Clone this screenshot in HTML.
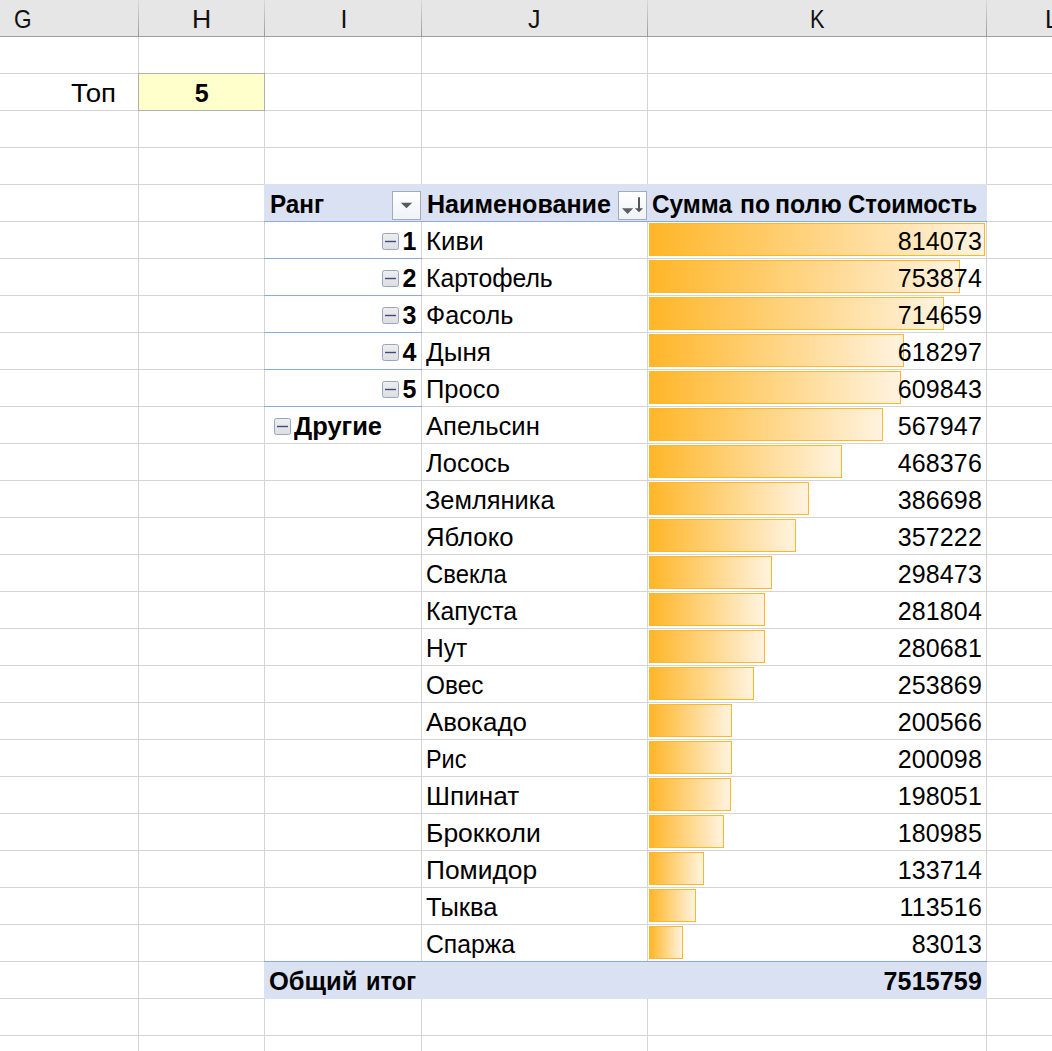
<!DOCTYPE html><html lang="ru"><head><meta charset="utf-8"><title>Sheet</title><style>
html,body{margin:0;padding:0;background:#fff;overflow:hidden;}
body{width:1052px;height:1051px;font-family:"Liberation Sans",sans-serif;}
div,span{position:absolute;box-sizing:border-box;}
.t{font-size:25px;line-height:37px;height:37px;white-space:nowrap;transform-origin:0 0;color:#000;}
.b{font-weight:bold;}
.n{letter-spacing:0.15px;}
.vg{top:37px;width:1px;height:1014px;background:#d4d4d4;}
.hg{left:0;width:1052px;height:1px;background:#d4d4d4;}
.bl{left:264px;width:158px;height:1px;background:#8ea9db;}
.bar{left:649px;height:33px;border:1px solid #ffb628;background:linear-gradient(90deg,#ffb628 0%,#fff3df 100%);}
.fb{width:29px;height:29px;border:1px solid #a3abb4;background:linear-gradient(180deg,#ffffff,#eff2f7);}
#s{left:0;top:0;width:1052px;height:1051px;overflow:hidden;background:#fff;}
</style></head><body><div id="s">
<div style="left:0;top:0;width:1052px;height:36px;background:#e6e6e6;"></div>
<div style="left:0;top:36px;width:1052px;height:1px;background:#9e9e9e;"></div>
<div style="left:138px;top:0;width:1px;height:37px;background:linear-gradient(180deg,#dadada,#9a9a9a);"></div>
<div style="left:264px;top:0;width:1px;height:37px;background:linear-gradient(180deg,#dadada,#9a9a9a);"></div>
<div style="left:421px;top:0;width:1px;height:37px;background:linear-gradient(180deg,#dadada,#9a9a9a);"></div>
<div style="left:647px;top:0;width:1px;height:37px;background:linear-gradient(180deg,#dadada,#9a9a9a);"></div>
<div style="left:986px;top:0;width:1px;height:37px;background:linear-gradient(180deg,#dadada,#9a9a9a);"></div>
<div class="vg" style="left:138px"></div>
<div class="vg" style="left:264px"></div>
<div class="vg" style="left:421px"></div>
<div class="vg" style="left:647px"></div>
<div class="vg" style="left:986px"></div>
<div class="hg" style="top:73px"></div>
<div class="hg" style="top:110px"></div>
<div class="hg" style="top:147px"></div>
<div class="hg" style="top:184px"></div>
<div class="hg" style="top:221px"></div>
<div class="hg" style="top:258px"></div>
<div class="hg" style="top:295px"></div>
<div class="hg" style="top:332px"></div>
<div class="hg" style="top:369px"></div>
<div class="hg" style="top:406px"></div>
<div class="hg" style="top:443px"></div>
<div class="hg" style="top:480px"></div>
<div class="hg" style="top:517px"></div>
<div class="hg" style="top:554px"></div>
<div class="hg" style="top:591px"></div>
<div class="hg" style="top:628px"></div>
<div class="hg" style="top:665px"></div>
<div class="hg" style="top:702px"></div>
<div class="hg" style="top:739px"></div>
<div class="hg" style="top:776px"></div>
<div class="hg" style="top:813px"></div>
<div class="hg" style="top:850px"></div>
<div class="hg" style="top:887px"></div>
<div class="hg" style="top:924px"></div>
<div class="hg" style="top:961px"></div>
<div class="hg" style="top:998px"></div>
<div class="hg" style="top:1035px"></div>
<div style="left:138px;top:73px;width:127px;height:38px;background:#ffffcc;border:1px solid #b0b0b0;"></div>
<div style="left:264px;top:184px;width:723px;height:37px;background:#d9e1f2;"></div>
<div style="left:264px;top:221px;width:723px;height:1px;background:#8ea9db;"></div>
<div style="left:264px;top:962px;width:723px;height:37px;background:#d9e1f2;"></div>
<div style="left:264px;top:961px;width:723px;height:1px;background:#8ea9db;"></div>
<div class="bl" style="top:258px"></div>
<div class="bl" style="top:295px"></div>
<div class="bl" style="top:332px"></div>
<div class="bl" style="top:369px"></div>
<div class="bl" style="top:406px"></div>
<div class="bar" style="top:223px;width:336px"></div>
<div class="bar" style="top:260px;width:311px"></div>
<div class="bar" style="top:297px;width:295px"></div>
<div class="bar" style="top:334px;width:255px"></div>
<div class="bar" style="top:371px;width:252px"></div>
<div class="bar" style="top:408px;width:234px"></div>
<div class="bar" style="top:445px;width:193px"></div>
<div class="bar" style="top:482px;width:160px"></div>
<div class="bar" style="top:519px;width:147px"></div>
<div class="bar" style="top:556px;width:123px"></div>
<div class="bar" style="top:593px;width:116px"></div>
<div class="bar" style="top:630px;width:116px"></div>
<div class="bar" style="top:667px;width:105px"></div>
<div class="bar" style="top:704px;width:83px"></div>
<div class="bar" style="top:741px;width:83px"></div>
<div class="bar" style="top:778px;width:82px"></div>
<div class="bar" style="top:815px;width:75px"></div>
<div class="bar" style="top:852px;width:55px"></div>
<div class="bar" style="top:889px;width:47px"></div>
<div class="bar" style="top:926px;width:34px"></div>
<svg width="17" height="17" viewBox="0 0 17 17" style="position:absolute;left:382px;top:233px"><defs><linearGradient id="bg0" x1="0" y1="0" x2="0" y2="1"><stop offset="0" stop-color="#eeeeee"/><stop offset="1" stop-color="#dedede"/></linearGradient></defs><rect x="0.5" y="0.5" width="16" height="16" rx="1.9" fill="url(#bg0)" stroke="#96a6c9"/><rect x="3" y="7.8" width="11" height="1.4" fill="#3a4a8a"/></svg>
<svg width="17" height="17" viewBox="0 0 17 17" style="position:absolute;left:382px;top:270px"><defs><linearGradient id="bg1" x1="0" y1="0" x2="0" y2="1"><stop offset="0" stop-color="#eeeeee"/><stop offset="1" stop-color="#dedede"/></linearGradient></defs><rect x="0.5" y="0.5" width="16" height="16" rx="1.9" fill="url(#bg1)" stroke="#96a6c9"/><rect x="3" y="7.8" width="11" height="1.4" fill="#3a4a8a"/></svg>
<svg width="17" height="17" viewBox="0 0 17 17" style="position:absolute;left:382px;top:307px"><defs><linearGradient id="bg2" x1="0" y1="0" x2="0" y2="1"><stop offset="0" stop-color="#eeeeee"/><stop offset="1" stop-color="#dedede"/></linearGradient></defs><rect x="0.5" y="0.5" width="16" height="16" rx="1.9" fill="url(#bg2)" stroke="#96a6c9"/><rect x="3" y="7.8" width="11" height="1.4" fill="#3a4a8a"/></svg>
<svg width="17" height="17" viewBox="0 0 17 17" style="position:absolute;left:382px;top:344px"><defs><linearGradient id="bg3" x1="0" y1="0" x2="0" y2="1"><stop offset="0" stop-color="#eeeeee"/><stop offset="1" stop-color="#dedede"/></linearGradient></defs><rect x="0.5" y="0.5" width="16" height="16" rx="1.9" fill="url(#bg3)" stroke="#96a6c9"/><rect x="3" y="7.8" width="11" height="1.4" fill="#3a4a8a"/></svg>
<svg width="17" height="17" viewBox="0 0 17 17" style="position:absolute;left:382px;top:381px"><defs><linearGradient id="bg4" x1="0" y1="0" x2="0" y2="1"><stop offset="0" stop-color="#eeeeee"/><stop offset="1" stop-color="#dedede"/></linearGradient></defs><rect x="0.5" y="0.5" width="16" height="16" rx="1.9" fill="url(#bg4)" stroke="#96a6c9"/><rect x="3" y="7.8" width="11" height="1.4" fill="#3a4a8a"/></svg>
<svg width="17" height="17" viewBox="0 0 17 17" style="position:absolute;left:274px;top:418px"><defs><linearGradient id="bg9" x1="0" y1="0" x2="0" y2="1"><stop offset="0" stop-color="#eeeeee"/><stop offset="1" stop-color="#dedede"/></linearGradient></defs><rect x="0.5" y="0.5" width="16" height="16" rx="1.9" fill="url(#bg9)" stroke="#96a6c9"/><rect x="3" y="7.8" width="11" height="1.4" fill="#3a4a8a"/></svg>
<div class="fb" style="left:392px;top:191px"><svg width="27" height="27" viewBox="0 0 27 27" style="position:absolute;left:0;top:0"><path d="M7.8 10.8h11.4l-5.7 5.4z" fill="#5a5a5a"/></svg></div>
<div class="fb" style="left:618px;top:191px"><svg width="27" height="27" viewBox="0 0 27 27" style="position:absolute;left:0;top:0"><path d="M3 16.3h11.2l-5.6 5.6z" fill="#5e5e5e"/><path d="M19 5.2h2v11.1h3.1l-4.1 4l-4.1-4h3.1z" fill="#555"/></svg></div>
<span class="t" style="left:14.07px;top:1px;transform:scaleX(0.9046);color:#111;">G</span>
<span class="t" style="left:192.37px;top:1px;transform:scaleX(1.0643);color:#111;">H</span>
<span class="t" style="left:340.40px;top:1px;color:#111;">I</span>
<span class="t" style="left:527.92px;top:1px;color:#111;">J</span>
<span class="t" style="left:810.06px;top:1px;transform:scaleX(0.8702);color:#111;">K</span>
<span class="t" style="left:1045.00px;top:1px;color:#111;">L</span>
<span class="t" style="left:71.05px;top:75px;transform:scaleX(1.1065);">Топ</span>
<span class="t b" style="left:194.75px;top:75px;">5</span>
<span class="t b" style="left:269.60px;top:186px;transform:scaleX(0.9709);">Ранг</span>
<span class="t b" style="left:426.74px;top:186px;transform:scaleX(1.0030);">Наименование</span>
<span class="t b" style="left:652.33px;top:186px;transform:scaleX(0.9723);">Сумма</span>
<span class="t b" style="left:739.77px;top:186px;transform:scaleX(0.9874);">по</span>
<span class="t b" style="left:774.66px;top:186px;transform:scaleX(0.9946);">полю</span>
<span class="t b" style="left:848.14px;top:186px;transform:scaleX(0.9553);">Стоимость</span>
<span class="t" style="left:426.43px;top:223px;transform:scaleX(1.0327);">Киви</span>
<span class="t n" style="right:70.05px;top:223px;">814073</span>
<span class="t b" style="right:635.55px;top:223px;">1</span>
<span class="t" style="left:426.12px;top:260px;transform:scaleX(0.9888);">Картофель</span>
<span class="t n" style="right:70.05px;top:260px;">753874</span>
<span class="t b" style="right:635.55px;top:260px;">2</span>
<span class="t" style="left:426.19px;top:297px;transform:scaleX(1.0083);">Фасоль</span>
<span class="t n" style="right:70.05px;top:297px;">714659</span>
<span class="t b" style="right:635.55px;top:297px;">3</span>
<span class="t" style="left:426.44px;top:334px;transform:scaleX(1.0440);">Дыня</span>
<span class="t n" style="right:70.05px;top:334px;">618297</span>
<span class="t b" style="right:635.55px;top:334px;">4</span>
<span class="t" style="left:426.11px;top:371px;transform:scaleX(1.0209);">Просо</span>
<span class="t n" style="right:70.05px;top:371px;">609843</span>
<span class="t b" style="right:635.55px;top:371px;">5</span>
<span class="t" style="left:426.00px;top:408px;transform:scaleX(1.0237);">Апельсин</span>
<span class="t n" style="right:70.05px;top:408px;">567947</span>
<span class="t" style="left:425.95px;top:445px;transform:scaleX(1.0191);">Лосось</span>
<span class="t n" style="right:70.05px;top:445px;">468376</span>
<span class="t" style="left:425.38px;top:482px;transform:scaleX(1.0166);">Земляника</span>
<span class="t n" style="right:70.05px;top:482px;">386698</span>
<span class="t" style="left:425.62px;top:519px;transform:scaleX(1.0272);">Яблоко</span>
<span class="t n" style="right:70.05px;top:519px;">357222</span>
<span class="t" style="left:426.01px;top:556px;transform:scaleX(0.9545);">Свекла</span>
<span class="t n" style="right:70.05px;top:556px;">298473</span>
<span class="t" style="left:425.66px;top:593px;transform:scaleX(0.9933);">Капуста</span>
<span class="t n" style="right:70.05px;top:593px;">281804</span>
<span class="t" style="left:426.19px;top:630px;transform:scaleX(0.9785);">Нут</span>
<span class="t n" style="right:70.05px;top:630px;">280681</span>
<span class="t" style="left:425.68px;top:667px;transform:scaleX(0.9754);">Овес</span>
<span class="t n" style="right:70.05px;top:667px;">253869</span>
<span class="t" style="left:426.00px;top:704px;transform:scaleX(1.0352);">Авокадо</span>
<span class="t n" style="right:70.05px;top:704px;">200566</span>
<span class="t" style="left:426.28px;top:741px;transform:scaleX(0.9370);">Рис</span>
<span class="t n" style="right:70.05px;top:741px;">200098</span>
<span class="t" style="left:426.01px;top:778px;transform:scaleX(1.0462);">Шпинат</span>
<span class="t n" style="right:70.05px;top:778px;">198051</span>
<span class="t" style="left:425.98px;top:815px;transform:scaleX(1.0593);">Брокколи</span>
<span class="t n" style="right:70.05px;top:815px;">180985</span>
<span class="t" style="left:425.99px;top:852px;transform:scaleX(1.0543);">Помидор</span>
<span class="t n" style="right:70.05px;top:852px;">133714</span>
<span class="t" style="left:425.99px;top:889px;transform:scaleX(1.0216);">Тыква</span>
<span class="t n" style="right:70.05px;top:889px;">113516</span>
<span class="t" style="left:426.31px;top:926px;transform:scaleX(0.9899);">Спаржа</span>
<span class="t n" style="right:70.05px;top:926px;">83013</span>
<span class="t b" style="left:294.45px;top:408px;transform:scaleX(1.0194);">Другие</span>
<span class="t b" style="left:268.98px;top:963px;transform:scaleX(1.0202);">Общий</span>
<span class="t b" style="left:365.65px;top:963px;transform:scaleX(0.9446);">итог</span>
<span class="t b n" style="right:70.05px;top:963px;">7515759</span>
</div></body></html>
